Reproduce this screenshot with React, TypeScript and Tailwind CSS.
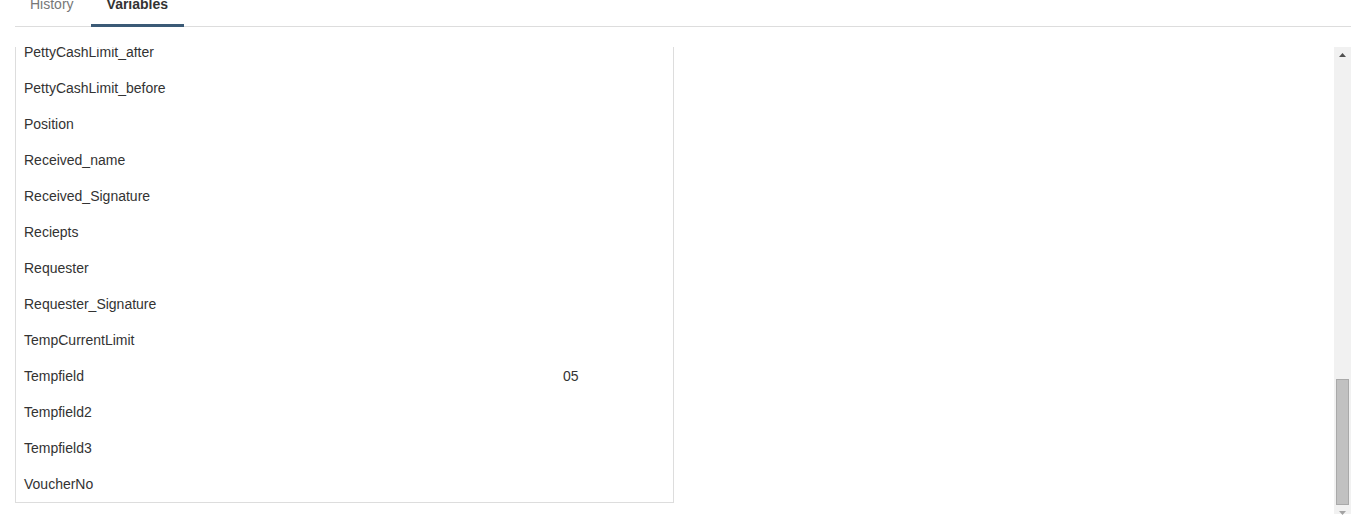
const rows: { name: string; value?: string }[] = [
  { name: "PettyCashLimit_after" },
  { name: "PettyCashLimit_before" },
  { name: "Position" },
  { name: "Received_name" },
  { name: "Received_Signature" },
  { name: "Reciepts" },
  { name: "Requester" },
  { name: "Requester_Signature" },
  { name: "TempCurrentLimit" },
  { name: "Tempfield", value: "05" },
  { name: "Tempfield2" },
  { name: "Tempfield3" },
  { name: "VoucherNo" },
];

export default function App() {
  return (
    <div className="h-[515px] w-[1366px] overflow-hidden bg-white font-['Liberation_Sans',Arial,sans-serif] text-[14px] text-[#333]">
      {/* Tabs */}
      <div className="mx-[15px] flex h-[27px] items-end gap-[2px] border-b border-[#ddd]">
        <div className="-mb-px flex h-[28px] items-end px-[15px] pb-[13px] leading-[20px] text-[#777]">History</div>
        <div className="-mb-px flex h-[28px] items-end border-b-[3px] border-[#3b5a76] px-[16px] pb-[10px] leading-[20px] font-bold text-[#333]">
          Variables
        </div>
      </div>

      {/* Scroll area */}
      <div className="mx-[15px] mt-[20px] flex h-[467px]">
        <div className="flex-1 overflow-hidden">
          <div className="-mt-[14px] w-[659px] border border-[#ddd]">
            {rows.map((r) => (
              <div key={r.name} className="flex h-[36px] items-center leading-[20px]">
                <div className="w-[547px] pl-[8px]">{r.name}</div>
                <div>{r.value}</div>
              </div>
            ))}
          </div>
        </div>

        {/* Scrollbar */}
        <div className="flex w-[17px] flex-col items-center bg-[#f1f1f1]">
          <svg width="9" height="6" viewBox="0 0 9 6" className="mt-[5px]">
            <path d="M4.5 1 L8 5 L1 5 Z" fill="#505050" />
          </svg>
          <div className="flex-1" />
          <div className="h-[126px] w-[13px] border border-[#a9a9a9] bg-[#c1c1c1]" />
          <svg width="9" height="6" viewBox="0 0 9 6" className="mt-[5px] mb-[-2px]">
            <path d="M1 1 L8 1 L4.5 5 Z" fill="#a3a3a3" />
          </svg>
        </div>
      </div>
    </div>
  );
}
